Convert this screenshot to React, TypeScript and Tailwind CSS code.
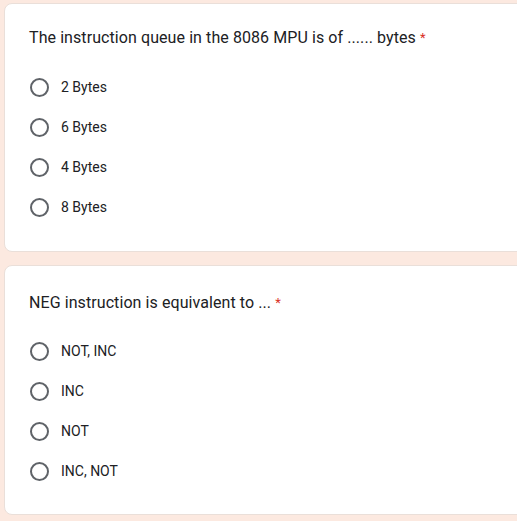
import React from "react";

function Radio() {
  return (
    <div className="w-5 h-5 flex items-center justify-center shrink-0">
      <div className="w-[19px] h-[19px] rounded-full border-2 border-[#5f6368]" />
    </div>
  );
}

function Question({
  title,
  options,
  pad,
}: {
  title: string;
  options: string[];
  pad: { card: string; list: string };
}) {
  return (
    <div className={"w-[540px] bg-white rounded-lg border border-[#eadfd9] pl-6 " + pad.card}>
      <div
        className="text-[16px] leading-6 text-[#202124] tracking-[0.08px]"
        style={{ fontFamily: "Roboto, sans-serif" }}
      >
        {title}
        <span className="text-[#d93025] text-[13px] align-top ml-1">*</span>
      </div>
      <div className={"flex flex-col " + pad.list}>
        {options.map((o) => (
          <div key={o} className="h-10 flex items-center gap-3">
            <Radio />
            <span className="text-[14px] text-[#202124]" style={{ fontFamily: "Roboto, sans-serif" }}>
              {o}
            </span>
          </div>
        ))}
      </div>
    </div>
  );
}

export default function App() {
  return (
    <div className="w-[517px] h-[521px] overflow-hidden bg-[#fce9e0] pl-1 pt-[3px] flex flex-col gap-[13px]">
      <Question
        title="The instruction queue in the 8086 MPU is of ...... bytes"
        options={["2 Bytes", "6 Bytes", "4 Bytes", "8 Bytes"]}
        pad={{ card: "pt-[22px] pb-[24px]", list: "mt-[17px]" }}
      />
      <Question
        title="NEG instruction is equivalent to ..."
        options={["NOT, INC", "INC", "NOT", "INC, NOT"]}
        pad={{ card: "pt-[25px] pb-[23px]", list: "mt-[16px]" }}
      />
    </div>
  );
}
